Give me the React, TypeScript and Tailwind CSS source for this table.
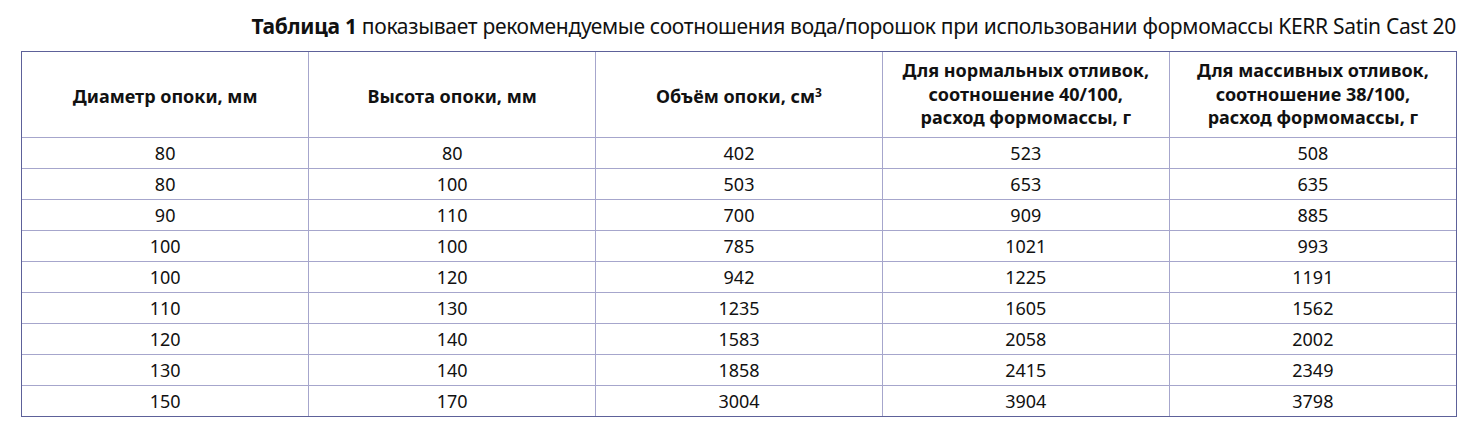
const rows: [number, number, number, number, number][] = [
  [80, 80, 402, 523, 508],
  [80, 100, 503, 653, 635],
  [90, 110, 700, 909, 885],
  [100, 100, 785, 1021, 993],
  [100, 120, 942, 1225, 1191],
  [110, 130, 1235, 1605, 1562],
  [120, 140, 1583, 2058, 2002],
  [130, 140, 1858, 2415, 2349],
  [150, 170, 3004, 3904, 3798],
]

export default function App() {
  return (
    <div className="w-[1472px] h-[438px] bg-white text-[#111] font-['Noto_Sans',sans-serif]">
      <div className="flex justify-end pr-[16px] pt-[12px] h-[51px]">
        <p className="text-[21px] leading-[28px] tracking-[-0.3px]">
          <span className="font-bold">Таблица 1</span> показывает рекомендуемые соотношения вода/порошок при использовании формомассы KERR Satin Cast 20
        </p>
      </div>
      <div className="ml-[21px] w-[1436px] border-[1.5px] border-[#5d6199]">
        <table className="w-full border-collapse table-fixed text-center">
          <thead>
            <tr className="h-[85px] text-[18px] leading-[23.5px] font-bold">
              <th className="w-1/5 border-r border-b border-[#a6a6cc] pt-[4px]">Диаметр опоки, мм</th>
              <th className="w-1/5 border-r border-b border-[#a6a6cc] pt-[4px]">Высота опоки, мм</th>
              <th className="w-1/5 border-r border-b border-[#a6a6cc] pt-[4px]">
                Объём опоки, см<sup className="text-[12px] font-bold">3</sup>
              </th>
              <th className="w-1/5 border-r border-b border-[#a6a6cc]">
                Для нормальных отливок,<br />соотношение 40/100,<br />расход формомассы, г
              </th>
              <th className="w-1/5 border-b border-[#a6a6cc]">
                Для массивных отливок,<br />соотношение 38/100,<br />расход формомассы, г
              </th>
            </tr>
          </thead>
          <tbody>
            {rows.map((r, i) => (
              <tr key={i} className="h-[31px] text-[18px] leading-[24px]">
                {r.map((v, j) => (
                  <td
                    key={j}
                    className={`${j < 4 ? 'border-r' : ''} ${i < rows.length - 1 ? 'border-b' : ''} border-[#a6a6cc] pt-[1px]`}
                  >
                    {v}
                  </td>
                ))}
              </tr>
            ))}
          </tbody>
        </table>
      </div>
    </div>
  )
}
